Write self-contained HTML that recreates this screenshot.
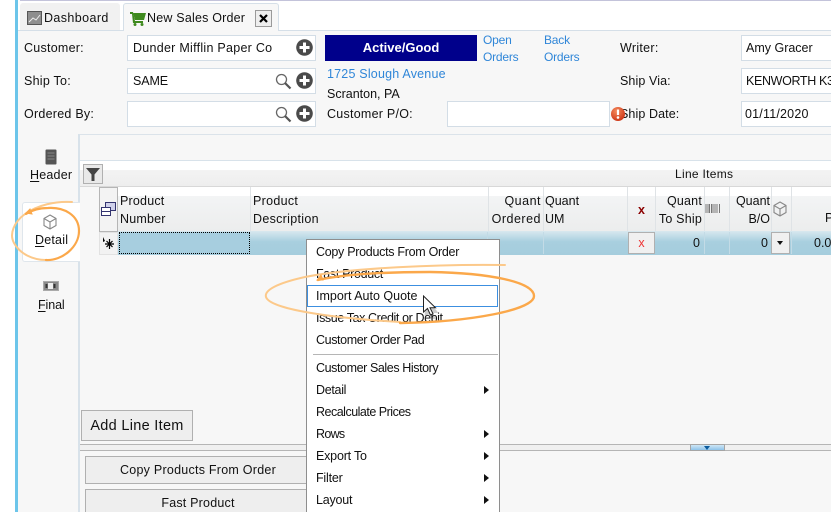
<!DOCTYPE html>
<html style="overflow:hidden;width:831px;height:512px"><head><meta charset="utf-8"><style>
html,body{margin:0;padding:0}
body{width:831px;height:512px;background:#fff}
#p{width:831px;height:512px;overflow:hidden;position:relative;background:#fff;font-family:"Liberation Sans",sans-serif;font-size:12.5px;color:#111}
.a{position:absolute}
.t{position:absolute;white-space:nowrap;line-height:16px}
.box{position:absolute;background:#fff;border:1px solid #d3dde6;box-sizing:border-box;height:26px}
.lnk{color:#2f86d8}
.sep{position:absolute;width:1px;background:#dfe3e6;top:187px;height:44px}
.sep2{position:absolute;width:1px;background:#c3dbe6;top:232px;height:22px}
.btn{position:absolute;background:#eee;border:1px solid #b0b0b0;box-sizing:border-box;text-align:center}
.r{text-align:right}
u{text-underline-offset:2px}
.m{position:absolute;left:316px;white-space:nowrap;line-height:16px}
.ar{position:absolute;left:484px;width:0;height:0;border-left:5px solid #111;border-top:4px solid transparent;border-bottom:4px solid transparent}
</style></head><body><div id="p">
<div class="a" style="left:15px;top:0;width:3px;height:512px;background:#6cc5ea"></div>
<div class="a" style="left:18px;top:0;width:813px;height:512px;background:#f7f7f7"></div>
<div class="a" style="left:18px;top:0;width:813px;height:31px;background:#fff"></div>
<div class="a" style="left:20px;top:0;width:811px;height:1px;background:#c3c3da"></div>
<div class="a" style="left:18px;top:30px;width:813px;height:1px;background:#d5dfe8"></div>
<div class="a" style="left:20px;top:3px;width:100px;height:27px;background:#f1f1f1;border-radius:3px 3px 0 0"></div>
<div class="a" style="left:123px;top:3px;width:156px;height:28px;background:#f7f7f7;border:1px solid #d5dfe8;border-bottom:0;box-sizing:border-box;border-radius:3px 3px 0 0"></div>
<svg class="a" style="left:27px;top:11px" width="15" height="14"><rect x=".5" y=".5" width="14" height="13" fill="#8e8e8e" stroke="#555"/><path d="M2 11 6 7l3 2 4-5" fill="none" stroke="#eee"/></svg>
<div class="t" style="left:44px;top:10px;letter-spacing:.4px">Dashboard</div>
<svg class="a" style="left:130px;top:11px" width="16" height="15"><path d="M0 1h3l2 9h8v2H3L2 3H0z" fill="#3f8a1e"/><path d="M3 2h13l-2 7H5z" fill="#3f8a1e"/><circle cx="5" cy="13.500" r="1.500" fill="#3f8a1e"/><circle cx="12" cy="13.500" r="1.500" fill="#3f8a1e"/></svg>
<div class="t" style="left:147px;top:10px;letter-spacing:.2px">New Sales Order</div>
<div class="a" style="left:255px;top:10px;width:17px;height:17px;background:#eee;border:1px solid #9a9a9a;box-sizing:border-box"></div>
<svg class="a" style="left:259px;top:14px" width="9" height="9"><path d="M1 1l7 7M8 1l-7 7" stroke="#000" stroke-width="2.200"/></svg>

<div class="t" style="left:24px;top:40px;letter-spacing:.25px">Customer:</div>
<div class="t" style="left:24px;top:73px;letter-spacing:.25px">Ship To:</div>
<div class="t" style="left:24px;top:106px;letter-spacing:.25px">Ordered By:</div>
<div class="box" style="left:127px;top:35px;width:189px"></div>
<div class="box" style="left:127px;top:68px;width:189px"></div>
<div class="box" style="left:127px;top:101px;width:189px"></div>
<div class="t" style="left:133px;top:40px;letter-spacing:.27px">Dunder Mifflin Paper Co</div>
<div class="t" style="left:133px;top:73px;letter-spacing:-.1px">SAME</div>
<svg class="a" style="left:296px;top:39px" width="17" height="17"><circle cx="8.500" cy="8.500" r="8.300" fill="#4a4a4a"/><path d="M8.500 3.500v10M3.500 8.500h10" stroke="#fff" stroke-width="3"/></svg>
<svg class="a" style="left:296px;top:72px" width="17" height="17"><circle cx="8.500" cy="8.500" r="8.300" fill="#4a4a4a"/><path d="M8.500 3.500v10M3.500 8.500h10" stroke="#fff" stroke-width="3"/></svg>
<svg class="a" style="left:296px;top:105px" width="17" height="17"><circle cx="8.500" cy="8.500" r="8.300" fill="#4a4a4a"/><path d="M8.500 3.500v10M3.500 8.500h10" stroke="#fff" stroke-width="3"/></svg>
<svg class="a" style="left:275px;top:73px" width="17" height="17"><circle cx="6.500" cy="6.500" r="5" fill="none" stroke="#666" stroke-width="1.300"/><path d="M10 10l5.500 5.500" stroke="#555" stroke-width="2.200"/></svg>
<svg class="a" style="left:275px;top:106px" width="17" height="17"><circle cx="6.500" cy="6.500" r="5" fill="none" stroke="#666" stroke-width="1.300"/><path d="M10 10l5.500 5.500" stroke="#555" stroke-width="2.200"/></svg>

<div class="a" style="left:325px;top:35px;width:152px;height:26px;background:#00008b;color:#fff;font-weight:bold;text-align:center;line-height:25px;font-size:13px">Active/Good</div>
<div class="t lnk" style="left:483px;top:32px;line-height:17px;font-size:12px;letter-spacing:-.2px">Open<br>Orders</div>
<div class="t lnk" style="left:544px;top:32px;line-height:17px;font-size:12px;letter-spacing:-.2px">Back<br>Orders</div>
<div class="t lnk" style="left:327px;top:66px;letter-spacing:.2px">1725 Slough Avenue</div>
<div class="t" style="left:327px;top:86px">Scranton, PA</div>
<div class="t" style="left:327px;top:106px;letter-spacing:.25px">Customer P/O:</div>
<div class="box" style="left:447px;top:101px;width:163px"></div>
<div class="t" style="left:620px;top:40px;letter-spacing:.3px">Writer:</div>
<div class="t" style="left:620px;top:73px;letter-spacing:.1px">Ship Via:</div>
<div class="t" style="left:620px;top:106px;letter-spacing:.1px">Ship Date:</div>
<svg class="a" style="left:611px;top:107px" width="14" height="14"><defs><radialGradient id="g" cx=".4" cy=".3" r=".8"><stop offset="0" stop-color="#f58b5c"/><stop offset="1" stop-color="#c92d10"/></radialGradient></defs><circle cx="7" cy="7" r="7" fill="url(#g)"/><path d="M7 2.500v5.500" stroke="#fff" stroke-width="2.200"/><circle cx="7" cy="10.500" r="1.300" fill="#fff"/></svg>
<div class="box" style="left:741px;top:35px;width:95px"></div>
<div class="box" style="left:741px;top:68px;width:95px"></div>
<div class="box" style="left:741px;top:101px;width:95px"></div>
<div class="t" style="left:746px;top:40px">Amy Gracer</div>
<div class="t" style="left:746px;top:73px;letter-spacing:-.35px;width:85px;overflow:hidden">KENWORTH K3</div>
<div class="t" style="left:745px;top:106px;letter-spacing:.2px">01/11/2020</div>

<div class="a" style="left:78px;top:134px;width:753px;height:1px;background:#dbe3ea"></div>
<div class="a" style="left:78px;top:134px;width:2px;height:378px;background:#d8e2ea"></div>

<svg class="a" style="left:45px;top:149px" width="12" height="16"><rect width="11" height="15" x=".5" y=".5" fill="#555" rx="1"/><path d="M2.500 4h7M2.500 7h7M2.500 10h7" stroke="#888"/></svg>
<div class="t" style="left:30px;top:167px;letter-spacing:.2px"><u>H</u>eader</div>
<div class="a" style="left:22px;top:202px;width:58px;height:60px;background:#fff;border:1px solid #dfe6ec;border-right:0;box-sizing:border-box;border-radius:3px 0 0 3px"></div>
<svg class="a" style="left:43px;top:214px" width="14" height="16" fill="none" stroke="#888" stroke-width="1.100"><path d="M7 1l6 3.500v7L7 15l-6-3.500v-7zM1 4.500L7 8l6-3.500M7 8v7"/></svg>
<div class="t" style="left:35px;top:232px;letter-spacing:.2px"><u>D</u>etail</div>
<svg class="a" style="left:43px;top:281px" width="16" height="11"><rect width="15" height="9" x=".5" y=".5" fill="#8a8a8a" stroke="#aaa"/><rect x="5" y="2" width="5" height="6" fill="#eee"/><rect x="2.500" y="3" width="2" height="4" fill="#333"/><rect x="10.500" y="3" width="2" height="4" fill="#333"/></svg>
<div class="t" style="left:38px;top:297px;letter-spacing:-.1px"><u>F</u>inal</div>

<div class="a" style="left:80px;top:160px;width:751px;height:27px;background:linear-gradient(#fff 0,#fff 35%,#f3f3f3 36%,#eee 100%);border-top:1px solid #d8e2ea;border-bottom:1px solid #d8d8d8;box-sizing:border-box"></div>
<div class="btn" style="left:83px;top:164px;width:20px;height:20px;background:#e9e9e9"></div>
<svg class="a" style="left:85px;top:167px" width="16" height="15"><path d="M1 1h14L9.500 7.500V14h-3V7.500z" fill="#444"/></svg>
<div class="t" style="left:675px;top:166px;font-size:12px;letter-spacing:.3px">Line Items</div>

<div class="a" style="left:118px;top:187px;width:713px;height:44px;background:linear-gradient(#fff 0,#fff 20%,#f3f4f5 21%,#eceded 100%)"></div>
<div class="a" style="left:99px;top:187px;width:19px;height:45px;background:#f3f3f3;border:1px solid #b5b5b5;box-sizing:border-box"></div>
<svg class="a" style="left:101px;top:202px" width="15" height="15" fill="none" stroke="#33336f"><rect x="4.500" y=".5" width="10" height="8" fill="#cfd0ea"/><rect x=".5" y="5.500" width="9" height="4" fill="#fff"/><rect x=".5" y="9.500" width="9" height="4" fill="#fff"/></svg>
<div class="t" style="left:120px;top:192px;line-height:18px;letter-spacing:.2px">Product<br>Number</div>
<div class="t" style="left:253px;top:192px;line-height:18px;letter-spacing:.3px">Product<br>Description</div>
<div class="t r" style="right:290px;top:192px;line-height:18px;letter-spacing:.5px">Quant<br>Ordered</div>
<div class="t" style="left:545px;top:192px;line-height:18px">Quant<br>UM</div>
<div class="t" style="left:638px;top:202px;color:#8b0000;font-weight:bold">x</div>
<div class="t r" style="right:129px;top:192px;line-height:18px;letter-spacing:.2px">Quant<br>To Ship</div>
<svg class="a" style="left:705px;top:204px" width="16" height="9"><path d="M1 0v9M3 0v9M4.500 0v9M6.500 0v9M8 0v9M10 0v9M12 0v9M14.500 0v9" stroke="#777" stroke-width="1"/></svg>
<div class="t r" style="right:61px;top:192px;line-height:18px">Quant<br>B/O</div>
<svg class="a" style="left:773px;top:201px" width="14" height="16" fill="none" stroke="#888" stroke-width="1.100"><path d="M7 1l6 3.500v7L7 15l-6-3.500v-7zM1 4.500L7 8l6-3.500M7 8v7"/></svg>
<div class="t" style="left:825px;top:210px">P</div>
<div class="sep" style="left:250px"></div><div class="sep" style="left:488px"></div><div class="sep" style="left:543px"></div><div class="sep" style="left:627px"></div><div class="sep" style="left:655px"></div><div class="sep" style="left:704px"></div><div class="sep" style="left:729px"></div><div class="sep" style="left:771px"></div><div class="sep" style="left:791px"></div>

<div class="a" style="left:118px;top:231px;width:713px;height:24px;background:linear-gradient(#d8e8ef 0,#a8cfdf 45%,#a5cddd 100%)"></div>
<div class="a" style="left:99px;top:232px;width:19px;height:23px;background:#f2f2f2;border:1px solid #e2e2e2;box-sizing:border-box"></div>
<svg class="a" style="left:102px;top:237px" width="13" height="13"><path d="M1 0v5l2-1z" fill="#000"/><path d="M7.500 2v10M3 7h9M4.500 4l6 6M10.500 4l-6 6" stroke="#000" stroke-width="1.200"/></svg>
<div class="a" style="left:119px;top:232px;width:131px;height:22px;background:#a7cedf;border:1px dotted #000;box-sizing:border-box"></div>
<div class="sep2" style="left:487px"></div><div class="sep2" style="left:543px"></div><div class="sep2" style="left:704px"></div><div class="sep2" style="left:729px"></div><div class="sep2" style="left:791px"></div>
<div class="btn" style="left:628px;top:232px;width:27px;height:22px;background:#f0f0f0;color:#ee3333;line-height:21px">x</div>
<div class="t r" style="right:131px;top:235px">0</div>
<div class="t r" style="right:63px;top:235px">0</div>
<div class="btn" style="left:771px;top:232px;width:19px;height:22px;background:#f0f0f0"></div>
<div class="a" style="left:777px;top:241px;width:0;height:0;border-top:4px solid #111;border-left:3px solid transparent;border-right:3px solid transparent"></div>
<div class="t" style="left:814px;top:235px">0.0</div>

<div class="btn" style="left:81px;top:410px;width:112px;height:31px;font-size:14.500px;line-height:30px;letter-spacing:.3px">Add Line Item</div>
<div class="a" style="left:80px;top:444px;width:751px;height:7px;background:#f0f0f0;border-top:1px solid #b5b5b5;border-bottom:1px solid #b5b5b5;box-sizing:border-box"></div>
<div class="a" style="left:690px;top:444px;width:35px;height:7px;background:linear-gradient(#cfe6f5,#8fc3ea);border:1px solid #a5a5a5;box-sizing:border-box"></div>
<div class="a" style="left:704px;top:446px;width:0;height:0;border-top:4px solid #0a5a9c;border-left:3px solid transparent;border-right:3px solid transparent"></div>
<div class="btn" style="left:85px;top:456px;width:226px;height:28px;line-height:26px;letter-spacing:.25px">Copy Products From Order</div>
<div class="btn" style="left:85px;top:489px;width:226px;height:23px;border-bottom:0;line-height:26px;letter-spacing:.2px">Fast Product</div>

<div class="a" style="left:306px;top:239px;width:194px;height:273px;background:#fff;border:1px solid #8e8e8e;border-bottom:0;box-sizing:border-box"></div>
<div class="a" style="left:307px;top:285px;width:191px;height:22px;border:1px solid #3c8fe0;box-sizing:border-box"></div>
<div class="a" style="left:313px;top:354px;width:185px;height:1px;background:#b5b5b5"></div>
<div class="m" style="top:244px;letter-spacing:-.29px">Copy Products From Order</div>
<div class="m" style="top:266px;letter-spacing:-.33px">Fast Product</div>
<div class="m" style="top:288px">Import Auto Quote</div>
<div class="m" style="top:310px;letter-spacing:-.4px">Issue Tax Credit or Debit</div>
<div class="m" style="top:332px;letter-spacing:-.39px">Customer Order Pad</div>
<div class="m" style="top:360px;letter-spacing:-.41px">Customer Sales History</div>
<div class="m" style="top:382px;letter-spacing:-.3px">Detail</div><div class="ar" style="top:386px"></div>
<div class="m" style="top:404px;letter-spacing:-.5px">Recalculate Prices</div>
<div class="m" style="top:426px;letter-spacing:-.7px">Rows</div><div class="ar" style="top:430px"></div>
<div class="m" style="top:448px;letter-spacing:-.2px">Export To</div><div class="ar" style="top:452px"></div>
<div class="m" style="top:470px;letter-spacing:-.2px">Filter</div><div class="ar" style="top:474px"></div>
<div class="m" style="top:492px;letter-spacing:-.2px">Layout</div><div class="ar" style="top:496px"></div>

<svg class="a" style="left:0;top:0" width="831" height="512" fill="none" stroke-linecap="round">
<path d="M72 202C55 201 38 205 25 214C14 222 9 234 14 243C20 254 33 260 46 260" stroke="#fcc98a" stroke-width="2"/>
<path d="M46 260C62 261 79 247 79 231C79 215 64 207 48 208C40 208 32 210 26 214" stroke="#fba84a" stroke-width="2.200"/>
<path d="M26 213l4-4 2 5z" fill="#fba84a" stroke="#fba84a"/>
<path d="M505 265C440 264 350 268 305 277C278 283 264 290 266 297C270 309 330 318 400 322" stroke="#fcc98a" stroke-width="2"/>
<path d="M400 323C470 322 534 310 534 296C534 282 490 273 430 272C390 272 345 274 318 280" stroke="#fba84a" stroke-width="2.400"/>
<path d="M317 280l4-5 2 5z" fill="#fba84a" stroke="#fba84a"/>
</svg>
<svg class="a" style="left:422px;top:295px" width="18" height="24"><path d="M2 3l2 1 11 12 1 2-5 0 3 6-4 1-3-6-4 4z" fill="#000" opacity=".2"/><path d="M1.500 1v16l4-3.500 3 6.500 2.500-1.200-3-6h5.500z" fill="#fff" stroke="#222" stroke-width="1"/></svg>
</div></body></html>
